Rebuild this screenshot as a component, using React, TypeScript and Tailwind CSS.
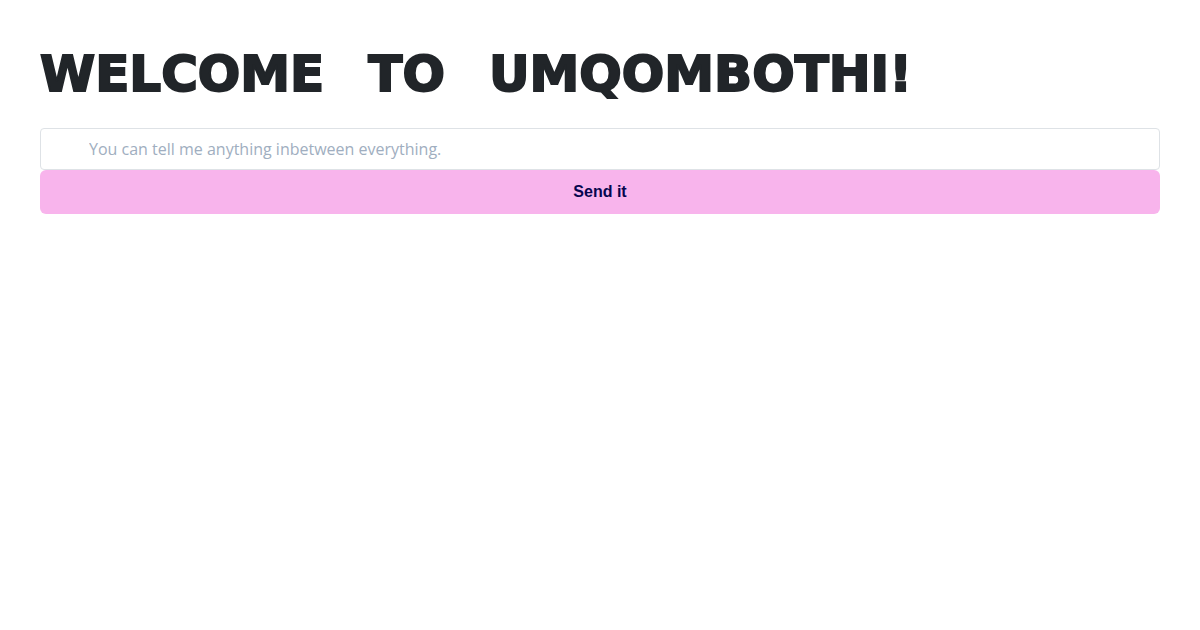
const heading = ["WELCOME", "TO", "UMQOMBOTHI!"];

export default function App() {
  return (
    <main className="min-h-screen bg-white px-10 pt-10 font-['Liberation_Sans',sans-serif]">
      <h1 className="mb-5 flex flex-wrap gap-x-11 font-['DejaVu_Sans',sans-serif] text-[50px] leading-[68px] font-bold text-[#212529] [-webkit-text-stroke:2px_#212529]">
        {heading.map((word) => (
          <span key={word}>{word} </span>
        ))}
      </h1>
      <form className="flex flex-col" onSubmit={(event) => event.preventDefault()}>
        <input
          type="text"
          aria-label="Message"
          placeholder="You can tell me anything inbetween everything."
          className="h-[42px] w-full rounded border border-[#dee2e6] bg-white px-12 font-['Open_Sans',sans-serif] text-base text-[#212529] outline-none placeholder:text-[#a0aec0]"
        />
        <button
          type="submit"
          className="h-11 w-full rounded-md bg-[#f8b4ec] text-base font-bold text-[#06064e]"
        >
          Send it
        </button>
      </form>
    </main>
  );
}
